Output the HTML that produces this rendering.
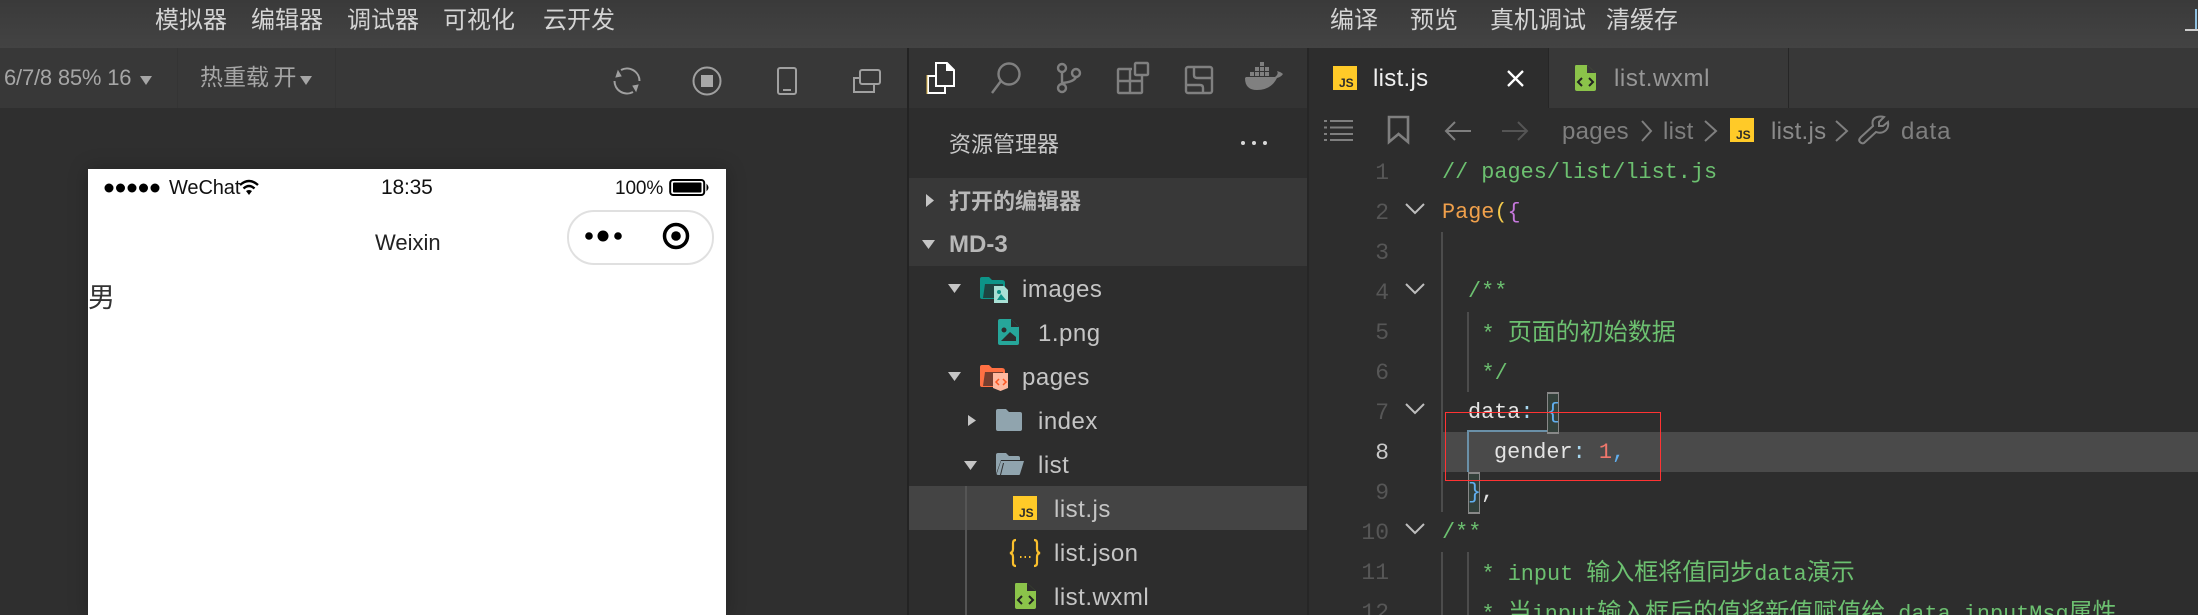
<!DOCTYPE html>
<html lang="zh">
<head>
<meta charset="utf-8">
<style>
html,body{margin:0;padding:0;background:#2f2f2f}
#r{position:relative;width:2198px;height:615px;overflow:hidden;background:#2f2f2f;font-family:"Liberation Sans","Noto Sans CJK SC",sans-serif}
#r>div,#r>svg{position:absolute}
.t{white-space:nowrap;line-height:1}
.m{color:#d4d4d4;font-size:24px;top:9px}
.x{color:#c5c5c5;font-size:24px;line-height:30px;height:30px;letter-spacing:.5px}
.mono{font-family:"Liberation Mono","Noto Sans CJK SC",monospace;font-size:21.83px;line-height:40px;height:40px;white-space:pre;color:#6cc070}
.mono .c{font-family:"Noto Sans CJK SC",sans-serif;font-size:24px;line-height:40px}
.n{font-family:"Liberation Mono",monospace;font-size:23px;line-height:40px;height:40px;color:#565656;text-align:right;width:60px;left:1329px}
.b{color:#7f7f7f;font-size:24px;line-height:30px;top:117px;white-space:nowrap;letter-spacing:.3px}
.arr{fill:#c5c5c5}
</style>
</head>
<body>
<div id="r">
<!-- top bar -->
<div style="left:0;top:0;width:2198px;height:48px;background:linear-gradient(#3a3a3a,#434343)"></div>
<div class="t m" style="left:155px">模拟器</div>
<div class="t m" style="left:251px">编辑器</div>
<div class="t m" style="left:347px">调试器</div>
<div class="t m" style="left:443px">可视化</div>
<div class="t m" style="left:543px">云开发</div>
<div class="t m" style="left:1330px">编译</div>
<div class="t m" style="left:1410px">预览</div>
<div class="t m" style="left:1490px">真机调试</div>
<div class="t m" style="left:1606px">清缓存</div>
<div style="left:2185px;top:29px;width:13px;height:2px;background:#ccc"></div>
<div style="left:2195px;top:9px;width:2px;height:20px;background:#8fc0e0"></div>

<!-- simulator toolbar -->
<div style="left:0;top:48px;width:907px;height:60px;background:#383838"></div>
<div style="left:177px;top:48px;width:1px;height:60px;background:#343434"></div>
<div style="left:335px;top:48px;width:1px;height:60px;background:#343434"></div>
<div class="t" style="left:4px;top:67px;font-size:22px;color:#a6a6a6;letter-spacing:-.2px">6/7/8 85% 16</div>
<svg style="left:140px;top:76px" width="12" height="9"><path d="M0 0H12L6 9Z" fill="#a6a6a6"/></svg>
<div class="t" style="left:200px;top:66px;font-size:23px;color:#a6a6a6;word-spacing:-2px">热重载 开</div>
<svg style="left:300px;top:76px" width="12" height="9"><path d="M0 0H12L6 9Z" fill="#a6a6a6"/></svg>
<svg style="left:600px;top:55px" width="300" height="50" fill="none" stroke="#a0a0a0" stroke-width="2">
<path d="M21 15A12.500 12.500 0 0 1 39.500 26M33 37A12.500 12.500 0 0 1 14.500 26"/>
<path d="M16 22L18 16L21 21Z" fill="#a0a0a0" stroke-width="1"/><path d="M38 30L36 36L33 31Z" fill="#a0a0a0" stroke-width="1"/>
<circle cx="107" cy="26" r="13.500"/><rect x="102" y="21" width="10" height="10" fill="#a8a8a8" stroke="#a8a8a8"/>
<rect x="178" y="13" width="18" height="26" rx="2"/><path d="M183 35H191"/>
<rect x="260" y="15" width="20" height="14" rx="2"/><path d="M260 23H254V37H274V30"/>
</svg>

<!-- phone -->
<div style="left:88px;top:169px;width:638px;height:446px;background:#fff;box-shadow:0 0 18px rgba(0,0,0,.25)"></div>
<svg style="left:104px;top:180px" width="65" height="16" fill="#000"><circle cx="5" cy="8" r="4.500"/><circle cx="16.500" cy="8" r="4.500"/><circle cx="28" cy="8" r="4.500"/><circle cx="39.500" cy="8" r="4.500"/><circle cx="51" cy="8" r="4.500"/></svg>
<div class="t" style="left:169px;top:178px;font-size:20px;color:#111;letter-spacing:-.1px">WeChat</div>
<svg style="left:239px;top:178px" width="20" height="20" fill="none" stroke="#000" stroke-width="2.400"><path d="M1 7Q10 -1 19 7M4.500 10.500Q10 5.500 15.500 10.500"/><path d="M7 13Q10 11 13 13L10 17Z" fill="#000" stroke="none"/></svg>
<div class="t" style="left:381px;top:177px;font-size:21px;color:#111;letter-spacing:-.2px">18:35</div>
<div class="t" style="left:615px;top:179px;font-size:19px;color:#111;letter-spacing:-.1px">100%</div>
<svg style="left:669px;top:178px" width="44" height="20"><rect x="1.200" y="2" width="34" height="15" rx="3" fill="none" stroke="#000" stroke-width="2"/><rect x="4" y="4.500" width="28.500" height="10" rx="1" fill="#000"/><path d="M38 7Q40 9.500 38 12Z" fill="#000" stroke="#000"/></svg>
<div class="t" style="left:375px;top:232px;font-size:22px;color:#222">Weixin</div>
<div style="left:567px;top:210px;width:143px;height:51px;border:2px solid #e0e0e0;border-radius:27px;background:#fff"></div>
<svg style="left:580px;top:220px" width="115" height="32"><circle cx="9" cy="16" r="3.800" fill="#000"/><circle cx="23" cy="16" r="5.500" fill="#000"/><circle cx="38" cy="16" r="3.800" fill="#000"/><circle cx="96" cy="16" r="11.500" fill="none" stroke="#000" stroke-width="3.500"/><circle cx="96" cy="16" r="4.800" fill="#000"/></svg>
<div class="t" style="left:88px;top:285px;font-size:27px;color:#333">男</div>

<!-- explorer -->
<div style="left:907px;top:48px;width:2px;height:567px;background:#232323"></div>
<div style="left:909px;top:48px;width:398px;height:567px;background:#2d2d2d"></div>
<div style="left:909px;top:48px;width:400px;height:60px;background:#333"></div>
<div style="left:1307px;top:48px;width:2px;height:567px;background:#262626"></div>
<svg style="left:909px;top:48px" width="400" height="60" fill="none" stroke="#808080" stroke-width="2">
<path d="M26 28H19V45H36V38" stroke="#fff"/><path d="M18 27V46" stroke="#e0b84a" stroke-width="1"/>
<path d="M27 15H38L45 22V38H27Z" stroke="#fff"/><path d="M38 15V22H45" stroke="#fff" fill="#fff"/>
<circle cx="100" cy="26" r="10.500" stroke-width="2.400"/><path d="M92 33L83 45" stroke-width="2.400"/>
<g stroke-width="2.400"><circle cx="153" cy="20" r="4"/><circle cx="153" cy="40" r="4"/><circle cx="167" cy="25" r="4"/><path d="M153 24V36"/><path d="M167 29Q165 34 153 35"/></g>
<g stroke-width="2.400"><rect x="209" y="21" width="24" height="24" rx="1"/><path d="M221 21V45M209 33H233"/><rect x="223" y="18" width="10" height="6" fill="#333" stroke="none"/><rect x="226" y="15" width="13" height="12" rx="1" fill="#333"/></g>
<g stroke-width="2.400"><rect x="277" y="19" width="26" height="26" rx="2"/><path d="M285 20V27Q285 30 288 30H303M277 37H291Q294 37 294 40V45"/></g>
<path d="M337 29H366Q370 26 368 23Q372 24 374 26Q372 29 368 30Q362 42 348 42Q336 42 336 30Z" fill="#808080" stroke="none"/>
<g fill="#808080" stroke="none"><rect x="341" y="24" width="4" height="4"/><rect x="346" y="24" width="4" height="4"/><rect x="351" y="24" width="4" height="4"/><rect x="356" y="24" width="4" height="4"/><rect x="346" y="19" width="4" height="4"/><rect x="351" y="19" width="4" height="4"/><rect x="356" y="19" width="4" height="4"/><rect x="351" y="14" width="4" height="4"/></g>
</svg>
<div class="t" style="left:949px;top:134px;font-size:22px;color:#c8c8c8">资源管理器</div>
<svg style="left:1238px;top:138px" width="32" height="10" fill="#d8d8d8"><circle cx="5" cy="5" r="2"/><circle cx="16" cy="5" r="2"/><circle cx="27" cy="5" r="2"/></svg>
<div style="left:909px;top:178px;width:398px;height:88px;background:#383838"></div>
<svg style="left:925px;top:193px" width="12" height="16"><path d="M1 1L9 7.500L1 14Z" fill="#c5c5c5"/></svg>
<div class="t" style="left:949px;top:191px;font-size:22px;font-weight:bold;color:#b8b8b8">打开的编辑器</div>
<svg style="left:922px;top:240px" width="14" height="10"><path d="M0 0H13L6.500 9Z" fill="#c5c5c5"/></svg>
<div class="t" style="left:949px;top:233px;font-size:24px;font-weight:bold;color:#b8b8b8">MD-3</div>

<svg style="left:948px;top:284px" width="14" height="10"><path d="M0 0H13L6.500 9Z" fill="#c5c5c5"/></svg>
<svg style="left:979px;top:276px" width="30" height="28"><path d="M1 3Q1 1 3 1H10L13 4H23Q26 4 26 7V23H3Q1 23 1 21Z" fill="#0d9488"/><path d="M4 22L6 8H24V22Z" fill="#23302f" opacity=".8"/><path d="M15 10H25L29 14V27H15Z" fill="#a8e0d5"/><path d="M18 24L22 18L27 24Z" fill="#0d9488"/><circle cx="20" cy="16" r="2" fill="#0d9488"/></svg>
<div class="x t" style="left:1022px;top:275px">images</div>
<svg style="left:998px;top:318px" width="22" height="28"><path d="M2 1H13L21 9V25Q21 27 19 27H2Q0 27 0 25V3Q0 1 2 1Z" fill="#26a69a"/><path d="M13 1V9H21Z" fill="#2d2d2d"/><circle cx="6" cy="12" r="2.500" fill="#2d2d2d"/><path d="M3 23L12 14L18 19V23Z" fill="#2d2d2d"/></svg>
<div class="x t" style="left:1038px;top:319px">1.png</div>

<svg style="left:948px;top:372px" width="14" height="10"><path d="M0 0H13L6.500 9Z" fill="#c5c5c5"/></svg>
<svg style="left:979px;top:364px" width="30" height="28"><path d="M1 3Q1 1 3 1H10L13 4H23Q26 4 26 7V23H3Q1 23 1 21Z" fill="#ff7043"/><path d="M4 22L6 8H24V22Z" fill="#3a2a26" opacity=".7"/><path d="M14 9H29V24L21.500 27L14 24Z" fill="#ffb9a0"/><path d="M20 15L17 18L20 21M24 15L27 18L24 21" fill="none" stroke="#ff5722" stroke-width="1.500"/></svg>
<div class="x t" style="left:1022px;top:363px">pages</div>
<svg style="left:968px;top:414px" width="10" height="14"><path d="M0 1L8 6.500L0 12Z" fill="#c5c5c5"/></svg>
<svg style="left:995px;top:408px" width="28" height="24"><path d="M1 3Q1 1 3 1H11L14 4H25Q27 4 27 6V21Q27 23 25 23H3Q1 23 1 21Z" fill="#90a4ae"/></svg>
<div class="x t" style="left:1038px;top:407px">index</div>
<svg style="left:964px;top:461px" width="14" height="10"><path d="M0 0H13L6.500 9Z" fill="#c5c5c5"/></svg>
<svg style="left:995px;top:452px" width="30" height="24"><path d="M1 3Q1 1 3 1H11L14 4H23Q25 4 25 6V8H6L1 22Z" fill="#90a4ae"/><path d="M6 9H29L25 22Q25 23 23 23H3Q1 23 2 21Z" fill="#90a4ae"/><path d="M5 23L8 11H9L6 23Z" fill="#2d2d2d"/></svg>
<div class="x t" style="left:1038px;top:451px">list</div>
<div style="left:909px;top:486px;width:398px;height:44px;background:#444"></div>
<div style="left:965px;top:486px;width:2px;height:129px;background:#555"></div>
<div style="left:1013px;top:496px;width:24px;height:24px;background:#ffca28"></div>
<div class="t" style="left:1019px;top:507px;font:bold 12px 'Liberation Sans',sans-serif;color:#2b2b2b;line-height:1">JS</div>
<div class="x t" style="left:1054px;top:495px">list.js</div>
<svg style="left:1008px;top:538px" width="34" height="30" fill="none" stroke="#fbc02d" stroke-width="2.200"><path d="M8 2Q5 2 5 5V11Q5 14.500 2 15Q5 15.500 5 19V25Q5 28 8 28M26 2Q29 2 29 5V11Q29 14.500 32 15Q29 15.500 29 19V25Q29 28 26 28"/><path d="M12 19H13.500M16.500 19H18M21 19H22.500" stroke-width="2"/></svg>
<div class="x t" style="left:1054px;top:539px">list.json</div>
<svg style="left:1014px;top:582px" width="22" height="28"><path d="M2 1H13L22 9V25Q22 27 20 27H3Q1 27 1 25V3Q1 1 2 1Z" fill="#8bc34a"/><path d="M13 1V9H22Z" fill="#2d2d2d"/><path d="M8 14L4 18L8 22M15 14L19 18L15 22" fill="none" stroke="#222" stroke-width="2"/></svg>
<div class="x t" style="left:1054px;top:583px">list.wxml</div>

<!-- editor -->
<div style="left:1309px;top:48px;width:889px;height:60px;background:#383838"></div>
<div style="left:1309px;top:108px;width:889px;height:507px;background:#2d2d2d"></div>
<div style="left:1309px;top:48px;width:239px;height:60px;background:#2d2d2d"></div>
<div style="left:1548px;top:48px;width:1px;height:60px;background:#262626"></div>
<div style="left:1788px;top:48px;width:1px;height:60px;background:#262626"></div>
<div style="left:1333px;top:66px;width:24px;height:24px;background:#ffca28"></div>
<div class="t" style="left:1339px;top:77px;font:bold 12px 'Liberation Sans',sans-serif;color:#2b2b2b;line-height:1">JS</div>
<div class="t" style="left:1373px;top:64px;font-size:24px;line-height:30px;color:#f0f0f0;letter-spacing:.3px">list.js</div>
<svg style="left:1506px;top:69px" width="20" height="20"><path d="M2 2L17 17M17 2L2 17" stroke="#fff" stroke-width="2.300" fill="none"/></svg>
<svg style="left:1574px;top:64px" width="22" height="28"><path d="M2 1H13L22 9V25Q22 27 20 27H3Q1 27 1 25V3Q1 1 2 1Z" fill="#8bc34a"/><path d="M13 1V9H22Z" fill="#383838"/><path d="M8 14L4 18L8 22M15 14L19 18L15 22" fill="none" stroke="#222" stroke-width="2"/></svg>
<div class="t" style="left:1614px;top:64px;font-size:24px;line-height:30px;color:#979797;letter-spacing:.6px">list.wxml</div>

<!-- breadcrumb -->
<svg style="left:1320px;top:114px" width="640" height="34" fill="none" stroke="#7f7f7f" stroke-width="2">
<path d="M10 7H33M10 13.500H33M10 20H33M10 26H33"/><path d="M4 7H7M4 13.500H7M4 20H7M4 26H7"/>
<path d="M69 3H88V28L78.500 20L69 28Z" stroke-width="2.600"/>
<path d="M151 17H126M135 8L126 17L135 26" stroke-width="2"/>
<path d="M182 17H207M198 8L207 17L198 26" stroke="#555"/>
<path d="M322 7L331 17L322 27M385 7L396 17L385 27M516 7L527 17L516 27"/>
<path d="M540 28Q538 26 541 23L553 12Q551 5 557 3Q561 2 564 3L559 8V12H563L568 8Q569 14 565 17Q561 20 556 18L544 29Q542 30 540 28Z"/>
</svg>
<div class="b" style="left:1562px">pages</div>
<div class="b" style="left:1663px">list</div>
<div style="left:1730px;top:118px;width:24px;height:24px;background:#ffca28"></div>
<div class="t" style="left:1736px;top:129px;font:bold 12px 'Liberation Sans',sans-serif;color:#2b2b2b;line-height:1">JS</div>
<div class="b" style="left:1771px;color:#8a8a8a">list.js</div>
<div class="b" style="left:1901px;letter-spacing:.9px">data</div>

<!-- active line -->
<div style="left:1441px;top:432px;width:757px;height:40px;background:#4a4a4a"></div>

<!-- guides -->
<svg style="left:1300px;top:150px" width="400" height="465" fill="none" stroke-width="2">
<path d="M142 82V362M142 402V465" stroke="#4c4c4c"/>
<path d="M168 162V242M168 402V465" stroke="#4c4c4c"/>
<path d="M168 322V281H258" stroke="#6a90a8"/>
<path d="M168 281V322" stroke="#6a90a8"/>
</svg>
<div style="left:1547px;top:392px;width:10px;height:38px;border:1px solid #888;border-width:2px 1.500px;background:#33403a"></div>
<div style="left:1468px;top:472px;width:10px;height:38px;border:1px solid #888;border-width:2px 1.500px;background:#33403a"></div>

<!-- line numbers -->
<div class="n" style="top:153px">1</div>
<div class="n" style="top:193px">2</div>
<div class="n" style="top:233px">3</div>
<div class="n" style="top:273px">4</div>
<div class="n" style="top:313px">5</div>
<div class="n" style="top:353px">6</div>
<div class="n" style="top:393px">7</div>
<div class="n" style="top:433px;color:#c8c8c8">8</div>
<div class="n" style="top:473px">9</div>
<div class="n" style="top:513px">10</div>
<div class="n" style="top:553px">11</div>
<div class="n" style="top:593px">12</div>
<svg style="left:1400px;top:190px" width="30" height="350" fill="none" stroke="#bdbdbd" stroke-width="2"><path d="M6 14L15 23L24 14M6 94L15 103L24 94M6 214L15 223L24 214M6 334L15 343L24 334"/></svg>

<!-- code -->
<div class="mono" style="left:1442px;top:153px">// pages/list/list.js</div>
<div class="mono" style="left:1442px;top:193px;color:#f0a04b">Page<span style="color:#f2c94c">(</span><span style="color:#c678dd">{</span></div>
<div class="mono" style="left:1468px;top:272px">/**</div>
<div class="mono" style="left:1481.500px;top:310px">* <span class="c">页面的初始数据</span></div>
<div class="mono" style="left:1481.500px;top:354px">*/</div>
<div class="mono" style="left:1468px;top:393px;color:#e4e4e4">data<span style="color:#a8d8f0">:</span> <span style="color:#61afef">{</span></div>
<div class="mono" style="left:1494px;top:433px;color:#e4e4e4">gender<span style="color:#a8d8f0">:</span> <span style="color:#f0776c">1</span><span style="color:#61afef">,</span></div>
<div class="mono" style="left:1468px;top:473px;color:#e4e4e4"><span style="color:#61afef">}</span>,</div>
<div class="mono" style="left:1442px;top:513px">/**</div>
<div class="mono" style="left:1481.500px;top:550px">* input <span class="c">输入框将值同步</span>data<span class="c">演示</span></div>
<div class="mono" style="left:1481.500px;top:590px">* <span class="c">当</span>input<span class="c">输入框后的值将新值赋值给</span> data.inputMsg<span class="c">属性</span></div>

<!-- red annotation -->
<div style="left:1445px;top:412px;width:214px;height:67px;border:1px solid #f33"></div>
</div>
</body>
</html>
